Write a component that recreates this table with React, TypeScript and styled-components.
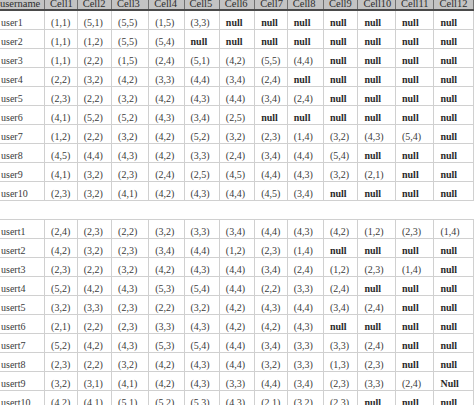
import React from "react";
import styled, { createGlobalStyle } from "styled-components";

const GlobalStyle = createGlobalStyle`
  html, body {
    margin: 0;
    padding: 0;
    background: #ffffff;
    overflow: hidden;
    font-family: "Liberation Serif", "DejaVu Serif", "Times New Roman", serif;
  }
`;

const Page = styled.div`
  width: 474px;
  height: 405px;
  overflow: hidden;
  background: #ffffff;
`;

const Table = styled.table`
  margin: -2px 0 0 -1px;
  border-collapse: collapse;
  table-layout: fixed;
  font-family: "Liberation Serif", "DejaVu Serif", "Times New Roman", serif;
  font-size: 10px;
  color: #3a3a3a;
`;

const HeadCell = styled.th`
  height: 12px;
  padding: 0 0 0 5px;
  box-sizing: border-box;
  background: #c3c3c3;
  border-left: 1px solid #707070;
  border-right: 1px solid #707070;
  border-bottom: 2px solid #4a4a4a;
  text-align: left;
  font-family: "Liberation Serif", "DejaVu Serif", serif;
  font-weight: normal;
  font-size: 10.5px;
  line-height: 10px;
  color: #2e2e2e;
  white-space: nowrap;
  overflow: hidden;

  &:first-child {
    border-left: none;
    padding-left: 1px;
  }
`;

const Cell = styled.td<{ $null?: boolean }>`
  height: 18px;
  padding: 7px 0 1px 6px;
  box-sizing: border-box;
  border: 1px solid #d0d0d0;
  text-align: left;
  vertical-align: middle;
  font-family: "Liberation Serif", "DejaVu Serif", serif;
  line-height: 10px;
  white-space: nowrap;
  overflow: hidden;
  font-weight: ${(p) => (p.$null ? "bold" : "normal")};
  color: ${(p) => (p.$null ? "#2a2a2a" : "#3a3a3a")};

  &:first-child {
    border-left: none;
    padding-left: 2px;
  }
`;

const Spacer = styled.td`
  height: 18px;
  padding: 0;
  border-top: 1px solid #bdbdbd;
  border-bottom: 1px solid #d0d0d0;
`;

const widths = [46, 33, 35, 38, 36, 36, 36, 33, 37, 35, 38, 39, 40];

const header = ["username", ...Array.from({ length: 12 }, (_, i) => `Cell${i + 1}`)];

const parse = (s: string) => s.trim().split(/\s+/);

const top: [string, string][] = [
  ["user1", "(1,1) (5,1) (5,5) (1,5) (3,3) null null null null null null null"],
  ["user2", "(1,1) (1,2) (5,5) (5,4) null null null null null null null null"],
  ["user3", "(1,1) (2,2) (1,5) (2,4) (5,1) (4,2) (5,5) (4,4) null null null null"],
  ["user4", "(2,2) (3,2) (4,2) (3,3) (4,4) (3,4) (2,4) null null null null null"],
  ["user5", "(2,3) (2,2) (3,2) (4,2) (4,3) (4,4) (3,4) (2,4) null null null null"],
  ["user6", "(4,1) (5,2) (5,2) (4,3) (3,4) (2,5) null null null null null null"],
  ["user7", "(1,2) (2,2) (3,2) (4,2) (5,2) (3,2) (2,3) (1,4) (3,2) (4,3) (5,4) null"],
  ["user8", "(4,5) (4,4) (4,3) (4,2) (3,3) (2,4) (3,4) (4,4) (5,4) null null null"],
  ["user9", "(4,1) (3,2) (2,3) (2,4) (2,5) (4,5) (4,4) (4,3) (3,2) (2,1) null null"],
  ["user10", "(2,3) (3,2) (4,1) (4,2) (4,3) (4,4) (4,5) (3,4) null null null null"],
];

const bottom: [string, string][] = [
  ["usert1", "(2,4) (2,3) (2,2) (3,2) (3,3) (3,4) (4,4) (4,3) (4,2) (1,2) (2,3) (1,4)"],
  ["usert2", "(4,2) (3,2) (2,3) (3,4) (4,4) (1,2) (2,3) (1,4) null null null null"],
  ["usert3", "(2,3) (2,2) (3,2) (4,2) (4,3) (4,4) (3,4) (2,4) (1,2) (2,3) (1,4) null"],
  ["usert4", "(5,2) (4,2) (4,3) (5,3) (5,4) (4,4) (2,2) (3,3) (2,4) null null null"],
  ["usert5", "(3,2) (3,3) (2,3) (2,2) (3,2) (4,2) (4,3) (4,4) (3,4) (2,4) null null"],
  ["usert6", "(2,1) (2,2) (2,3) (3,3) (4,3) (4,2) (4,2) (4,3) null null null null"],
  ["usert7", "(5,2) (4,2) (4,3) (5,3) (5,4) (4,4) (3,4) (3,3) (3,3) (2,4) null null"],
  ["usert8", "(2,3) (2,2) (3,2) (4,2) (4,3) (4,4) (3,2) (3,3) (1,3) (2,3) null null"],
  ["usert9", "(3,2) (3,1) (4,1) (4,2) (4,3) (3,3) (4,4) (3,4) (2,3) (3,3) (2,4) Null"],
  ["usert10", "(4,2) (4,1) (5,1) (5,2) (5,3) (4,3) (2,1) (3,2) (2,3) null null null"],
];

const Row = ({ name, values }: { name: string; values: string }) => (
  <tr>
    <Cell>{name}</Cell>
    {parse(values).map((v, i) => (
      <Cell key={i} $null={v.toLowerCase() === "null"}>
        {v}
      </Cell>
    ))}
  </tr>
);

export default function App() {
  return (
    <Page>
      <GlobalStyle />
      <Table>
        <colgroup>
          {widths.map((w, i) => (
            <col key={i} style={{ width: w }} />
          ))}
        </colgroup>
        <thead>
          <tr>
            {header.map((h) => (
              <HeadCell key={h}>{h}</HeadCell>
            ))}
          </tr>
        </thead>
        <tbody>
          {top.map(([n, v]) => (
            <Row key={n} name={n} values={v} />
          ))}
          <tr>
            <Spacer colSpan={13} />
          </tr>
          {bottom.map(([n, v]) => (
            <Row key={n} name={n} values={v} />
          ))}
        </tbody>
      </Table>
    </Page>
  );
}
